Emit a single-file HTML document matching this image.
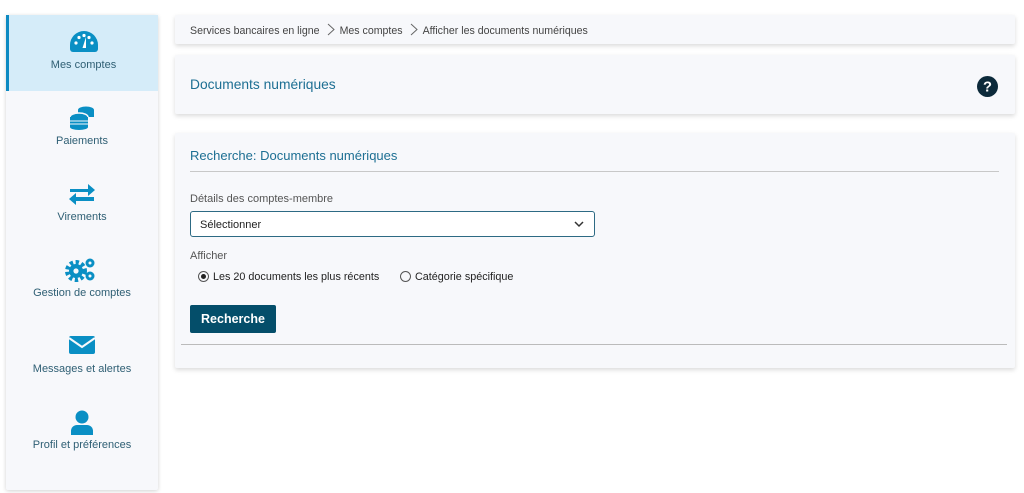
<!DOCTYPE html>
<html><head><meta charset="utf-8"><style>
*{margin:0;padding:0;box-sizing:border-box}
body{width:1024px;height:493px;background:#fff;font-family:"Liberation Sans",sans-serif;position:relative;overflow:hidden}
.side{position:absolute;left:6px;top:15px;width:152px;height:475px;background:#f7f8fb;box-shadow:0 1px 4px rgba(0,0,0,.18);border-radius:2px}
.it{height:76px;position:relative;text-align:center;color:#2f5f74;font-size:11px}
.it svg{position:absolute;left:50%;transform:translateX(-50%);top:14px}
.it span{position:absolute;left:0;right:0;top:44px}
.act{background:#d5ecf9;border-left:3px solid #0d8ac2}
.card{position:absolute;left:175px;width:840px;background:#f7f8fb;box-shadow:0 2px 5px rgba(0,0,0,.15);border-radius:2px}
.bc{top:15px;height:29px;font-size:10.6px;color:#444;padding:8px 15px;line-height:14px}
.bc svg{margin:0 5px 0 7px;vertical-align:-2px}
.tt{top:55px;height:59px}
.tt h1{font-weight:normal;font-size:13.8px;color:#1d6f93;position:absolute;left:15px;top:22px}
.sc{top:133px;height:235px}
h2{font-weight:normal;font-size:13px;color:#1d6f93;position:absolute;left:15px;top:15px}
.hr1{position:absolute;left:15px;right:16px;top:38px;border-top:1px solid #c8c8c8}
.lab{position:absolute;left:15px;font-size:11px;color:#555}
.sel{position:absolute;left:15px;top:78px;width:405px;height:26px;border:1px solid #2d6a84;border-radius:3px;background:#fff;font-size:11px;color:#222;padding:7px 9px}
.rad{position:absolute;top:138px;font-size:10.8px;color:#222}
.rad b{display:inline-block;width:11px;height:11px;border:1px solid #555;border-radius:50%;vertical-align:-2px;margin-right:4px;position:relative}
.rad b.on:after{content:"";position:absolute;left:2px;top:2px;width:5px;height:5px;border-radius:50%;background:#222}
.btn{position:absolute;left:15px;top:172px;width:86px;height:28px;background:#044e6a;border-radius:2px;color:#fff;font-weight:bold;font-size:12.5px;text-align:center;line-height:28px}
.hr2{position:absolute;left:6px;right:8px;top:211px;border-top:1px solid #bbb}
</style></head><body>
<div class="side">
<div class="it act"><svg width="30" height="24" viewBox="0 0 30 24" style="top:15px"><path d="M15 1A14 14 0 0 0 1 15v4a3 3 0 0 0 3 3h22a3 3 0 0 0 3-3v-4A14 14 0 0 0 15 1z" fill="#0a8fc4"/><circle cx="7" cy="13" r="1.6" fill="#fff"/><circle cx="10" cy="7.5" r="1.6" fill="#fff"/><circle cx="23" cy="13" r="1.6" fill="#fff"/><circle cx="20" cy="7.5" r="1.6" fill="#fff"/><circle cx="15" cy="5.5" r="1.6" fill="#fff"/><path d="M17 7l-3.5 11h3.5z" fill="#fff"/></svg><span>Mes comptes</span></div>
<div class="it"><svg width="30" height="26" viewBox="0 0 30 26"><ellipse cx="19" cy="5" rx="8" ry="3.5" fill="#0a8fc4"/><rect x="11" y="5" width="16" height="7" fill="#0a8fc4"/><ellipse cx="12" cy="12" rx="9" ry="4" fill="#0a8fc4" stroke="#f7f8fb" stroke-width="1.5"/><rect x="3" y="12" width="18" height="10" fill="#0a8fc4"/><ellipse cx="12" cy="22" rx="9" ry="3" fill="#0a8fc4"/><path d="M3 16h18M3 19h18" stroke="#f7f8fb"/></svg><span>Paiements</span></div>
<div class="it"><svg width="28" height="24" viewBox="0 0 28 24"><path d="M2 8h18V3l7 6-7 6v-4H2z" fill="#0a8fc4"/><path d="M26 15H8v-4l-7 6 7 6v-4h18z" fill="#0a8fc4" transform="translate(0,1)"/></svg><span>Virements</span></div>
<div class="it"><svg width="34" height="26" viewBox="0 0 34 26"><circle cx="11" cy="14" r="8" fill="none" stroke="#0a8fc4" stroke-width="6" stroke-dasharray="3 2.3"/><circle cx="11" cy="14" r="7" fill="#0a8fc4"/><circle cx="11" cy="14" r="2.6" fill="#f7f8fb"/><circle cx="25" cy="6" r="4.5" fill="#0a8fc4"/><circle cx="25" cy="6" r="1.5" fill="#f7f8fb"/><circle cx="25" cy="19" r="4.5" fill="#0a8fc4"/><circle cx="25" cy="19" r="1.5" fill="#f7f8fb"/></svg><span>Gestion de comptes</span></div>
<div class="it"><svg width="28" height="22" viewBox="0 0 28 22"><rect x="1" y="3" width="26" height="18" rx="2" fill="#0a8fc4"/><path d="M1 5l13 9 13-9" fill="none" stroke="#f7f8fb" stroke-width="2"/></svg><span>Messages et alertes</span></div>
<div class="it"><svg width="26" height="26" viewBox="0 0 26 26"><circle cx="13" cy="8" r="6.5" fill="#0a8fc4"/><path d="M2 26v-4a6 6 0 0 1 6-6h10a6 6 0 0 1 6 6v4z" fill="#0a8fc4"/></svg><span>Profil et préférences</span></div>
</div>
<div class="card bc">Services bancaires en ligne<svg width="8" height="13" viewBox="0 0 8 13"><path d="M1 1l6 5.5L1 12" fill="none" stroke="#666" stroke-width="1"/></svg>Mes comptes<svg width="8" height="13" viewBox="0 0 8 13"><path d="M1 1l6 5.5L1 12" fill="none" stroke="#666" stroke-width="1"/></svg>Afficher les documents numériques</div>
<div class="card tt"><h1>Documents numériques</h1><svg style="position:absolute;left:802px;top:21px" width="21" height="21" viewBox="0 0 20 20"><circle cx="10" cy="10" r="10" fill="#0c2a3a"/><text x="10" y="15" text-anchor="middle" font-family="Liberation Sans" font-weight="bold" font-size="14" fill="#fff">?</text></svg></div>
<div class="card sc">
<h2>Recherche: Documents numériques</h2><div class="hr1"></div>
<div class="lab" style="top:60px">Détails des comptes-membre</div>
<div class="sel">Sélectionner<svg style="position:absolute;right:10px;top:9px" width="10" height="7" viewBox="0 0 10 7"><path d="M1 1l4 4 4-4" fill="none" stroke="#333" stroke-width="1.5"/></svg></div>
<div class="lab" style="top:117px">Afficher</div>
<div class="rad" style="left:23px"><b class="on"></b>Les 20 documents les plus récents</div>
<div class="rad" style="left:225px"><b></b>Catégorie spécifique</div>
<div class="btn">Recherche</div>
<div class="hr2"></div>
</div>
</body></html>
